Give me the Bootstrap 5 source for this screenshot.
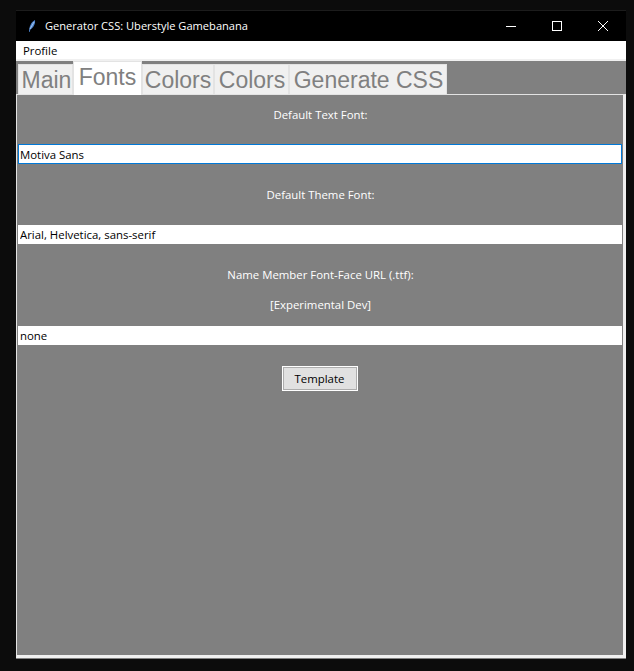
<!DOCTYPE html>
<html lang="en">
<head>
<meta charset="utf-8">
<title>Generator CSS</title>
<link href="https://cdn.jsdelivr.net/npm/bootstrap@5.3.0/dist/css/bootstrap.min.css" rel="stylesheet">
<style>
html,body{height:100%;margin:0;background:#0c0c0c;overflow:hidden}
body{padding:10px 8px 12px 16px;font-family:"Open Sans","Noto Sans",sans-serif;font-size:11.4px}
.win{width:610px;height:649px;border-top:1px solid #1c1c1c;background:#808080}
.titlebar{height:30px;background:#000;color:#fff;font-size:11.1px}
.appicon{margin:0 9px 0 12px}
.winbtn{width:46px;height:30px}
.menubar{height:18px;background:#fff;color:#000;padding-left:7px;line-height:19px}
.topline{height:2px;background:#f0f0f0}
.tabstrip{height:33px;padding-left:2px;background:#808080}
.tabitem{font-family:"Liberation Sans",Arial,sans-serif;font-size:23px;line-height:31px;color:#808080;background:#f0f0f0;height:30px;border:1px solid #e3e3e3;border-bottom:0;margin-top:3px;text-align:center;white-space:nowrap}
.tabitem.on{background:#fff;height:34px;margin-top:0;line-height:31px;border:1px solid #e3e3e3;border-bottom:0;position:relative;z-index:1}
.tab-a{width:55px;padding-left:2px}.tab-b{width:69px}.tab-c{width:72px}.tab-d{width:75px;padding-left:1px}.tab-e{width:158px;padding-left:1px}
.panel{height:564px;border:1px solid #e3e3e3;border-width:1px 3px 3px 1px;border-bottom-color:#f0f0f0;border-right-color:#f0f0f0;background:#808080;padding:0 0 0 1px}
.lbl{color:#fff;text-align:center;height:30px;line-height:30px}
.field{display:block;width:604px;height:19px;border:1px solid #fff;border-radius:0;background:#fff;color:#000;padding:0 1px;font:11.4px "Open Sans","Noto Sans",sans-serif;outline:0}
.field.focus{height:20px;border-color:#0078d7}
.tplbtn{width:76px;height:25px;margin-right:2px;background:#e1e1e1;color:#000;border:1px solid #fff;box-shadow:inset 0 0 0 1px #adadad;font-size:11.4px;padding:0;border-radius:0}
.slot-0{margin-top:5px}.slot-a{margin-top:14px}.slot-b{margin-top:16px}.slot-c{margin-top:15px}.slot-d{margin-top:16px}.slot-e{margin-top:6px}.slot-f{margin-top:21px}
</style>
</head>
<body>
<div class="win d-flex flex-column">
  <div class="titlebar d-flex align-items-center">
    <svg class="appicon" width="8" height="14" viewBox="0 0 8 14"><path d="M1 13C1 8 3 3 7 1C7.500 5 5.500 8.500 2.400 10.500L1.600 13Z" fill="#4f86d0"/><path d="M2 10L6 3" stroke="#b9d3f2" stroke-width=".8"/></svg>
    <span class="flex-grow-1">Generator CSS: Uberstyle Gamebanana</span>
    <div class="winbtn d-flex align-items-center justify-content-center"><svg width="10" height="10" viewBox="0 0 10 10"><path d="M0 5.500H10" stroke="#fff"/></svg></div>
    <div class="winbtn d-flex align-items-center justify-content-center"><svg width="10" height="10" viewBox="0 0 10 10"><rect x=".5" y=".5" width="9" height="9" fill="none" stroke="#fff"/></svg></div>
    <div class="winbtn d-flex align-items-center justify-content-center"><svg width="10" height="10" viewBox="0 0 10 10"><path d="M0 0L10 10M10 0L0 10" stroke="#fff"/></svg></div>
  </div>
  <div class="menubar">Profile</div>
  <div class="topline"></div>
  <div class="tabstrip d-flex">
    <div class="tabitem tab-a">Main</div>
    <div class="tabitem on tab-b">Fonts</div>
    <div class="tabitem tab-c">Colors</div>
    <div class="tabitem tab-d">Colors</div>
    <div class="tabitem tab-e">Generate CSS</div>
  </div>
  <div class="panel">
    <div class="lbl slot-0">Default Text Font:</div>
    <div class="slot-a"><input class="field focus" value="Motiva Sans"></div>
    <div class="lbl slot-b">Default Theme Font:</div>
    <div class="slot-c"><input class="field" value="Arial, Helvetica, sans-serif"></div>
    <div class="lbl slot-d">Name Member Font-Face URL (.ttf):</div>
    <div class="lbl">[Experimental Dev]</div>
    <div class="slot-e"><input class="field" value="none"></div>
    <div class="text-center slot-f"><button class="btn tplbtn" type="button">Template</button></div>
  </div>
</div>
</body>
</html>
